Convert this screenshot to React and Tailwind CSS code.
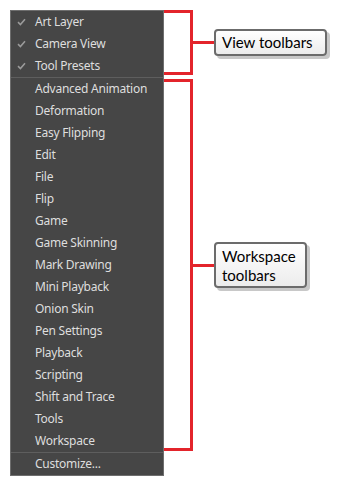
import React from 'react';

const VIEW_ITEMS = ['Art Layer', 'Camera View', 'Tool Presets'];
const WORKSPACE_ITEMS = [
  'Advanced Animation', 'Deformation', 'Easy Flipping', 'Edit', 'File', 'Flip',
  'Game', 'Game Skinning', 'Mark Drawing', 'Mini Playback', 'Onion Skin',
  'Pen Settings', 'Playback', 'Scripting', 'Shift and Trace', 'Tools', 'Workspace',
];

function Check() {
  return (
    <svg width="9" height="8" viewBox="0 0 9 8" className="shrink-0">
      <path d="M1 4.2 L3.4 6.5 L8 1.2" fill="none" stroke="#9a9a9a" strokeWidth="1.6" />
    </svg>
  );
}

function MenuItem({ label, checked }) {
  return (
    <div className="flex items-center h-[22px] text-[12px] tracking-[-0.25px] text-[#dedede]">
      <div className="w-[24px] flex justify-end pr-[9px]">{checked && <Check />}</div>
      <span>{label}</span>
    </div>
  );
}

function Callout({ children, className }) {
  return (
    <div
      className={`rounded-[4px] border-2 border-[#6b6b6b] bg-gradient-to-b from-white to-[#ececec] px-[6px] text-[15px] leading-[19px] text-black shadow-[3px_3px_0_#c8c8c8] ${className}`}
      style={{ fontFamily: 'Lato, "Open Sans", sans-serif' }}
    >
      {children}
    </div>
  );
}

export default function App() {
  return (
    <div className="w-[341px] h-[486px] bg-white pt-[10px] pl-[10px] flex">
      {/* Toolbars menu */}
      <div
        className="w-[154px] h-[466px] bg-[#464646] border border-[#6e6e6e] flex flex-col"
        style={{ fontFamily: '"Noto Sans", "Open Sans", sans-serif' }}
      >
        {VIEW_ITEMS.map((t) => <MenuItem key={t} label={t} checked />)}
        <div className="h-px bg-[#5e5e5e]" />
        {WORKSPACE_ITEMS.map((t) => <MenuItem key={t} label={t} />)}
        <div className="h-px bg-[#5e5e5e]" />
        <MenuItem label="Customize..." />
      </div>

      {/* Annotation brackets */}
      <div className="flex flex-col">
        <div className="flex items-center h-[65px]">
          <div className="w-[29px] h-full border-t-[3px] border-r-[3px] border-b-[3px] border-[#e3242b]" />
          <div className="w-[21px] h-[3px] bg-[#e3242b]" />
          <Callout className="w-[113px] h-[27px] pt-[2px]">View toolbars</Callout>
        </div>
        <div className="flex items-center h-[372px] mt-[4px]">
          <div className="w-[29px] h-full border-t-[3px] border-r-[3px] border-b-[3px] border-[#e3242b]" />
          <div className="w-[21px] h-[3px] bg-[#e3242b]" />
          <Callout className="w-[93px] h-[46px] pt-[3px]">Workspace<br />toolbars</Callout>
        </div>
      </div>
    </div>
  );
}
